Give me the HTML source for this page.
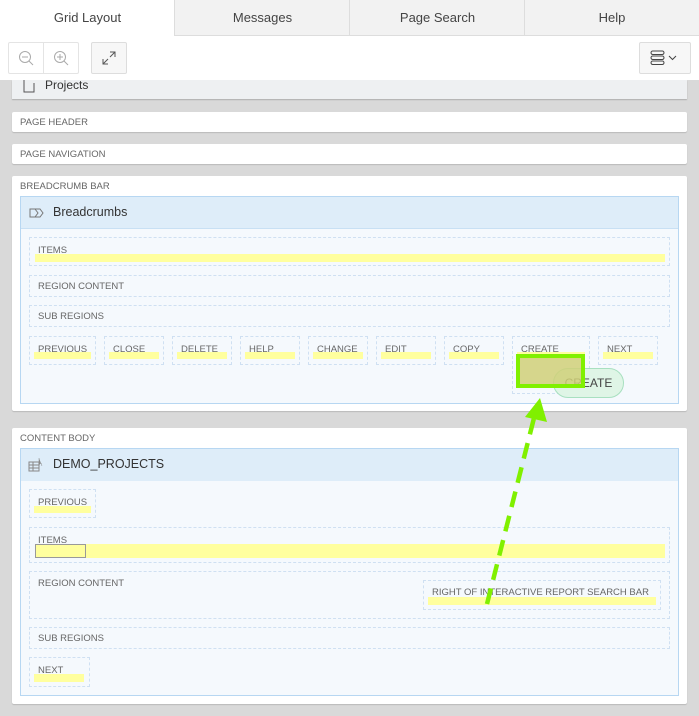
<!DOCTYPE html>
<html><head><style>
*{box-sizing:border-box;margin:0;padding:0}
body{width:699px;height:716px;background:#d9d9d9;font-family:"Liberation Sans",sans-serif;position:relative;overflow:hidden;color:#444}
.a{position:absolute}
.tab{position:absolute;top:0;height:36px;background:#f2f2f2;border-left:1px solid #ddd;border-bottom:1px solid #ddd;font-size:13px;color:#444;text-align:center;line-height:35px}
.w{background:#fff;border-radius:2px;box-shadow:0 1px 1px rgba(0,0,0,.15)}
.lbl{font-size:9.5px;color:#666;letter-spacing:0}
.d{position:absolute;border:1px dashed #cfe0f2}
.y{position:absolute;background:#ffff9e}
.d span{position:absolute;left:8px;top:7px;font-size:9.5px;color:#666}
</style></head><body>
<div class="a" style="left:0;top:0;width:699px;height:80px;background:#fff"></div>
<div class="tab" style="left:0;width:175px;background:#fff;border:none">Grid Layout</div>
<div class="tab" style="left:174px;width:176px">Messages</div>
<div class="tab" style="left:349px;width:176px">Page Search</div>
<div class="tab" style="left:524px;width:175px">Help</div>
<div class="a" style="left:8px;top:42px;width:71px;height:32px;border:1px solid #e4e4e4;border-radius:2px"></div>
<div class="a" style="left:43px;top:42px;width:1px;height:32px;background:#e4e4e4"></div>
<svg class="a" style="left:17px;top:49px" width="18" height="18"><circle cx="8" cy="8" r="5.5" fill="none" stroke="#aaa"/><line x1="5" y1="8" x2="11" y2="8" stroke="#aaa"/><line x1="12" y1="12" x2="16" y2="16" stroke="#aaa"/></svg>
<svg class="a" style="left:52px;top:49px" width="18" height="18"><circle cx="8" cy="8" r="5.5" fill="none" stroke="#aaa"/><line x1="5" y1="8" x2="11" y2="8" stroke="#aaa"/><line x1="8" y1="5" x2="8" y2="11" stroke="#aaa"/><line x1="12" y1="12" x2="16" y2="16" stroke="#aaa"/></svg>
<div class="a" style="left:91px;top:42px;width:36px;height:32px;border:1px solid #ddd;border-radius:2px;background:#f7f7f7"></div>
<svg class="a" style="left:101px;top:50px" width="16" height="16"><path d="M9 2h5v5M14 2l-5 5M2 9v5h5M2 14l5-5" fill="none" stroke="#555"/></svg>
<div class="a" style="left:639px;top:42px;width:52px;height:32px;border:1px solid #ddd;border-radius:2px;background:#f7f7f7"></div>
<svg class="a" style="left:650px;top:50px" width="32" height="16"><rect x="1" y="1" width="13" height="3.5" rx="1.7" fill="none" stroke="#444"/><rect x="1" y="6" width="13" height="3.5" rx="1.7" fill="none" stroke="#444"/><rect x="1" y="11" width="13" height="3.5" rx="1.7" fill="none" stroke="#444"/><path d="M19 6l3.5 3.5L26 6" fill="none" stroke="#444"/></svg>

<div class="a" style="left:12px;top:80px;width:675px;height:19px;background:#eef0f2;box-shadow:0 1px 1px rgba(0,0,0,.2)"></div>
<svg class="a" style="left:23px;top:80px" width="12" height="13"><path d="M1 0v12h10V3" fill="none" stroke="#555"/></svg>
<div class="a" style="left:45px;top:78px;font-size:12px;color:#333">Projects</div>

<div class="a w" style="left:12px;top:112px;width:675px;height:20px"><span class="a lbl" style="left:8px;top:5px">PAGE HEADER</span></div>
<div class="a w" style="left:12px;top:144px;width:675px;height:20px"><span class="a lbl" style="left:8px;top:5px">PAGE NAVIGATION</span></div>

<div class="a w" style="left:12px;top:176px;width:675px;height:235px"><span class="a lbl" style="left:8px;top:5px">BREADCRUMB BAR</span></div>
<div class="a" style="left:20px;top:196px;width:659px;height:208px;background:#f5f9fd;border:1px solid #b7d7f2"></div>
<div class="a" style="left:21px;top:197px;width:657px;height:32px;background:#deedf9;border-bottom:1px solid #c8e0f4"></div>
<svg class="a" style="left:29px;top:207px" width="16" height="12"><path d="M1 2h10l3 4-3 4H1z" fill="none" stroke="#777"/><path d="M6 2l3 4-3 4" fill="none" stroke="#777"/></svg>
<div class="a" style="left:53px;top:205px;font-size:12.5px;color:#333">Breadcrumbs</div>
<div class="d" style="left:29px;top:237px;width:641px;height:29px"><span>ITEMS</span></div>
<div class="y" style="left:35px;top:254px;width:630px;height:8px"></div>
<div class="d" style="left:29px;top:275px;width:641px;height:22px"><span style="top:5px">REGION CONTENT</span></div>
<div class="d" style="left:29px;top:305px;width:641px;height:22px"><span style="top:5px">SUB REGIONS</span></div>

<div class="d" style="left:29px;top:336px;width:67px;height:29px"><span>PREVIOUS</span></div>
<div class="d" style="left:104px;top:336px;width:60px;height:29px"><span>CLOSE</span></div>
<div class="d" style="left:172px;top:336px;width:60px;height:29px"><span>DELETE</span></div>
<div class="d" style="left:240px;top:336px;width:60px;height:29px"><span>HELP</span></div>
<div class="d" style="left:308px;top:336px;width:60px;height:29px"><span>CHANGE</span></div>
<div class="d" style="left:376px;top:336px;width:60px;height:29px"><span>EDIT</span></div>
<div class="d" style="left:444px;top:336px;width:60px;height:29px"><span>COPY</span></div>
<div class="d" style="left:512px;top:336px;width:78px;height:58px"><span>CREATE</span></div>
<div class="d" style="left:598px;top:336px;width:60px;height:29px"><span>NEXT</span></div>
<div class="y" style="left:34px;top:352px;width:57px;height:7px"></div>
<div class="y" style="left:109px;top:352px;width:50px;height:7px"></div>
<div class="y" style="left:177px;top:352px;width:50px;height:7px"></div>
<div class="y" style="left:245px;top:352px;width:50px;height:7px"></div>
<div class="y" style="left:313px;top:352px;width:50px;height:7px"></div>
<div class="y" style="left:381px;top:352px;width:50px;height:7px"></div>
<div class="y" style="left:449px;top:352px;width:50px;height:7px"></div>
<div class="y" style="left:517px;top:352px;width:68px;height:7px"></div>
<div class="y" style="left:603px;top:352px;width:50px;height:7px"></div>
<div class="a" style="left:553px;top:368px;width:71px;height:30px;border-radius:15px;background:#dff5e6;border:1px solid #a8e0c0;font-size:12px;color:#444;text-align:center;line-height:28px">CREATE</div>
<div class="a" style="left:516px;top:354px;width:69px;height:34px;background:rgba(208,208,120,.85);border:4px solid #80f000"></div>

<div class="a w" style="left:12px;top:428px;width:675px;height:276px"><span class="a lbl" style="left:8px;top:5px">CONTENT BODY</span></div>
<div class="a" style="left:20px;top:448px;width:659px;height:248px;background:#f5f9fd;border:1px solid #b7d7f2"></div>
<div class="a" style="left:21px;top:449px;width:657px;height:32px;background:#deedf9"></div>
<svg class="a" style="left:28px;top:457px" width="16" height="16"><path d="M1 5h10v9H1zM1 8h10M1 11h10M5 5v9" fill="none" stroke="#888"/><path d="M11 1v7l2-2 1 3" fill="#888" stroke="#888" stroke-width=".5"/></svg>
<div class="a" style="left:53px;top:457px;font-size:12.5px;color:#333">DEMO_PROJECTS</div>
<div class="d" style="left:29px;top:489px;width:67px;height:29px"><span>PREVIOUS</span></div>
<div class="y" style="left:34px;top:506px;width:57px;height:7px"></div>
<div class="d" style="left:29px;top:527px;width:641px;height:36px"><span>ITEMS</span></div>
<div class="y" style="left:35px;top:544px;width:630px;height:14px"></div>
<div class="a" style="left:35px;top:544px;width:51px;height:14px;border:1px solid #999"></div>
<div class="d" style="left:29px;top:571px;width:641px;height:48px"><span style="top:6px">REGION CONTENT</span></div>
<div class="d" style="left:423px;top:580px;width:238px;height:30px"><span style="top:6px">RIGHT OF INTERACTIVE REPORT SEARCH BAR</span></div>
<div class="y" style="left:428px;top:597px;width:228px;height:8px"></div>
<div class="d" style="left:29px;top:627px;width:641px;height:22px"><span style="top:5px">SUB REGIONS</span></div>
<div class="d" style="left:29px;top:657px;width:61px;height:30px"><span>NEXT</span></div>
<div class="y" style="left:34px;top:674px;width:50px;height:8px"></div>

<svg class="a" style="left:0;top:0" width="699" height="716"><line x1="487" y1="604" x2="534" y2="418" stroke="#80f000" stroke-width="4.5" stroke-dasharray="16 9"/><path d="M525 417L540 398L547 422Z" fill="#80f000"/></svg>
</body></html>
